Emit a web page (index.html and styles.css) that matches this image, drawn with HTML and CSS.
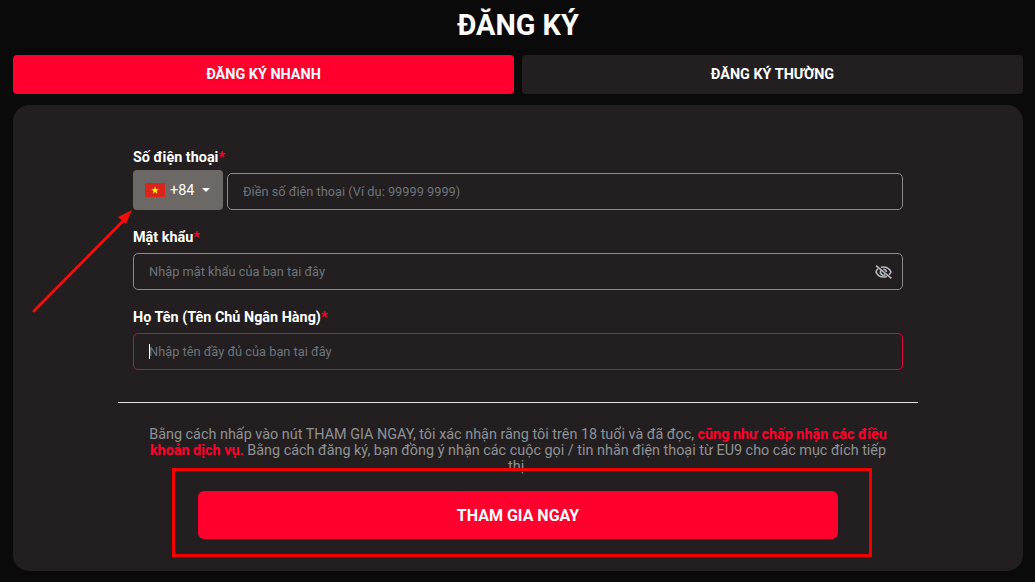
FILE: index.html
```html
<!DOCTYPE html>
<html lang="vi">
<head>
<meta charset="utf-8">
<title>Đăng ký</title>
<link rel="stylesheet" href="styles.css">
</head>
<body>
<main class="page">
  <h1 class="title">ĐĂNG KÝ</h1>
  <div class="tabs">
    <button class="tab tab-active">ĐĂNG KÝ NHANH</button>
    <button class="tab">ĐĂNG KÝ THƯỜNG</button>
  </div>
  <section class="card">
    <form class="form">
      <div class="field">
        <label class="label">Số điện thoại<span class="req">*</span></label>
        <div class="phone-row">
          <div class="country">
            <svg class="flag" viewBox="0 0 20 14" width="20" height="14"><rect width="20" height="14" fill="#da251d"/><polygon points="10,3.4 10.95,6.2 13.8,6.2 11.5,8 12.35,10.8 10,9.1 7.65,10.8 8.5,8 6.2,6.2 9.05,6.2" fill="#ffff00"/></svg>
            <span class="code">+84</span>
            <span class="caret-down"></span>
          </div>
          <div class="input-box phone-box"><input class="input" placeholder="Điền số điện thoại (Ví dụ: 99999 9999)"></div>
        </div>
      </div>
      <div class="field">
        <label class="label">Mật khẩu<span class="req">*</span></label>
        <div class="input-box">
          <input class="input" placeholder="Nhập mật khẩu của bạn tại đây">
          <svg class="eye" viewBox="0 0 17 14" width="17" height="14" fill="none" stroke="#b4b8bc"><path stroke-width="1.7" d="M3.2 3.6C1.9 4.6 1.1 5.9 1 7c1.3 2.9 4.2 5 7.5 5 1.2 0 2.3-.3 3.3-.8M6 2.4C6.8 2.1 7.6 2 8.5 2c3.3 0 6.2 2.1 7.5 5-.4 1-1.1 1.9-1.9 2.6"/><path stroke-width="1.6" d="M6.2 5.2A3 3 0 0 0 10.2 9.6M8.4 4.2a3 3 0 0 1 3 2.8"/><path stroke-width="1.6" d="M1 .6l15.4 12.8"/></svg>
        </div>
      </div>
      <div class="field">
        <label class="label">Họ Tên (Tên Chủ Ngân Hàng)<span class="req">*</span></label>
        <div class="input-box input-error">
          <input class="input" placeholder="Nhập tên đầy đủ của bạn tại đây">
          <span class="text-caret"></span>
        </div>
      </div>
    </form>
    <hr class="divider">
    <p class="terms">Bằng cách nhấp vào nút THAM GIA NGAY, tôi xác nhận rằng tôi trên 18 tuổi và đã đọc, <strong class="terms-link">cũng như chấp nhận các điều khoản dịch vụ.</strong> Bằng cách đăng ký, bạn đồng ý nhận các cuộc gọi / tin nhắn điện thoại từ EU9 cho các mục đích tiếp thị.</p>
    <button class="submit" type="button">THAM GIA NGAY</button>
  </section>
</main>
<div class="mark-box"></div>
<svg class="mark-arrow" viewBox="0 0 1035 582" width="1035" height="582">
  <line x1="34" y1="311" x2="123" y2="221" stroke="#f50d0d" stroke-width="2.8" stroke-linecap="round"/>
  <polygon points="132,210 126,224 118,217" fill="#f50d0d"/>
</svg>
</body>
</html>
```

FILE: styles.css
```css
* { box-sizing: border-box; }
html, body { margin: 0; height: 100%; }
body {
  background: #0a0a0a;
  color: #fff;
  font-family: Roboto, "Noto Sans", sans-serif;
  overflow: hidden;
}
.page {
  display: flex;
  flex-direction: column;
  padding: 0 12px 0 13px;
  height: 582px;
}
.title {
  margin: 0;
  height: 55px;
  font-size: 28.8px;
  font-weight: 700;
  line-height: 51px;
  text-align: center;
}
.tabs {
  display: flex;
  gap: 8px;
  height: 39px;
}
.tab {
  flex: 1;
  border: 0;
  border-radius: 4px;
  background: #231f20;
  color: #fff;
  font: 700 14.4px Roboto, sans-serif;
  padding-top: 1px;
}
.tab-active { background: #ff002e; }
.card {
  margin-top: 11px;
  height: 466px;
  background: #231f20;
  border-radius: 16px;
  padding: 43px 0 0;
  display: flex;
  flex-direction: column;
  align-items: center;
}
.form {
  width: 770px;
  display: flex;
  flex-direction: column;
  gap: 18px;
}
.field { display: flex; flex-direction: column; }
.label {
  height: 22px;
  font-size: 14.4px;
  font-weight: 700;
  line-height: 20px;
}
.req { color: #ff002e; }
.phone-row { display: flex; gap: 4px; align-items: flex-end; }
.country {
  width: 90px;
  height: 40px;
  border-radius: 4px;
  background: #6b6865;
  display: flex;
  align-items: center;
  padding-left: 12px;
}
.flag { flex: none; }
.code { margin-left: 5px; font-size: 14.4px; color: #fff; padding-top: 1px; }
.caret-down {
  margin-left: 8px;
  width: 0;
  height: 0;
  border-left: 4px solid transparent;
  border-right: 4px solid transparent;
  border-top: 4px solid #fff;
}
.input-box {
  position: relative;
  height: 37px;
  margin-top: 3px;
  display: flex;
  align-items: center;
  border: 1px solid #8c8a8a;
  border-radius: 5px;
  padding: 0 15px;
}
.phone-box { flex: 1; margin-top: 0; }
.input-error { border-color: #d9083a; }
.input {
  flex: 1;
  min-width: 0;
  border: 0;
  outline: 0;
  padding: 0;
  background: transparent;
  color: #fff;
  font: 400 12.8px Roboto, sans-serif;
}
.input::placeholder { color: #6c757d; opacity: 1; }
.eye { flex: none; margin-right: -5px; }
.text-caret {
  position: absolute;
  left: 15px;
  top: 10px;
  width: 1px;
  height: 15px;
  background: #fff;
}
.divider {
  width: 800px;
  margin: 32px 0 0;
  border: 0;
  border-top: 1px solid #e6e6e6;
}
.terms {
  width: 744px;
  height: 48px;
  margin: 24px 0 0;
  font-size: 14.4px;
  line-height: 16px;
  color: #8f9296;
  text-align: center;
}
.terms-link { color: #ff002e; font-weight: 700; }
.submit {
  width: 640px;
  height: 48px;
  margin-top: 16px;
  border: 0;
  border-radius: 6px;
  background: #ff002e;
  color: #fff;
  font: 700 16px Roboto, sans-serif;
}
.mark-box {
  position: absolute;
  left: 172px;
  top: 468px;
  width: 700px;
  height: 89px;
  border: 3px solid #f50000;
  pointer-events: none;
}
.mark-arrow {
  position: absolute;
  left: 0;
  top: 0;
  pointer-events: none;
}
```
